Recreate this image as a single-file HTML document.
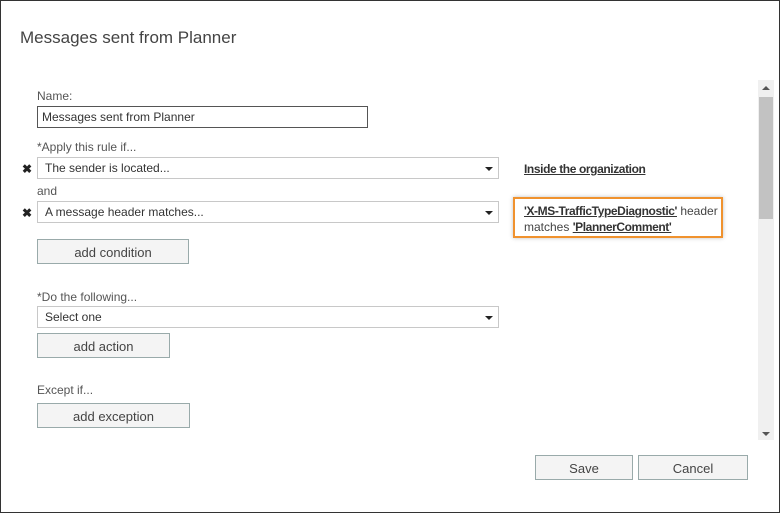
<!DOCTYPE html>
<html><head><style>
*{margin:0;padding:0;box-sizing:border-box}
body{width:780px;height:513px;background:#fff;font-family:"Liberation Sans",sans-serif;font-size:12px;color:#333;position:relative;overflow:hidden}
.frame{position:absolute;left:0;top:0;width:780px;height:513px;border:1px solid #333}
.a{position:absolute;white-space:nowrap}
.lbl{color:#555}
.inp{position:absolute;border:1px solid #c8c8c8;background:#fff;height:22px;line-height:21px;padding-left:7px;color:#333}
.inp .ar{position:absolute;right:5px;top:9px;width:0;height:0;border-left:4px solid transparent;border-right:4px solid transparent;border-top:4px solid #222}
.btn{position:absolute;border:1px solid #9aa;background:#f4f4f4;height:25px;line-height:25px;text-align:center;color:#444;font-size:13px}
.x{position:absolute;font-size:12px;font-weight:bold;color:#222}
a{color:#333;text-decoration:underline;font-weight:bold;letter-spacing:-0.4px}
</style></head><body>
<div class="frame"></div>
<div class="a" style="left:20px;top:28px;font-size:17px;color:#444">Messages sent from Planner</div>
<div class="a lbl" style="left:37px;top:89px">Name:</div>
<div class="inp" style="left:37px;top:106px;width:331px;border-color:#555;padding-left:4px">Messages sent from Planner</div>
<div class="a lbl" style="left:37px;top:140px">*Apply this rule if...</div>
<div class="x" style="left:22px;top:162px">✖</div>
<div class="inp" style="left:37px;top:157px;width:462px">The sender is located...<span class="ar"></span></div>
<div class="a" style="left:524px;top:162px"><a>Inside the organization</a></div>
<div class="a lbl" style="left:37px;top:184px">and</div>
<div class="x" style="left:22px;top:206px">✖</div>
<div class="inp" style="left:37px;top:201px;width:462px">A message header matches...<span class="ar"></span></div>
<div class="a" style="left:513px;top:197px;width:210px;height:41px;border:2px solid #f0922e;box-shadow:0 0 4px rgba(0,0,0,.25);padding:4px 0 0 9px;line-height:16px;white-space:normal;color:#444"><a>'X-MS-TrafficTypeDiagnostic'</a> header<br>matches <a>'PlannerComment'</a></div>
<div class="btn" style="left:37px;top:239px;width:152px">add condition</div>
<div class="a lbl" style="left:37px;top:290px">*Do the following...</div>
<div class="inp" style="left:37px;top:306px;width:462px">Select one<span class="ar"></span></div>
<div class="btn" style="left:37px;top:333px;width:133px">add action</div>
<div class="a lbl" style="left:37px;top:383px">Except if...</div>
<div class="btn" style="left:37px;top:403px;width:153px">add exception</div>
<div class="a" style="left:758px;top:80px;width:16px;height:360px;background:#f0f0f0"></div>
<div class="a" style="left:759px;top:97px;width:14px;height:122px;background:#c2c2c2"></div>
<div class="a" style="left:762px;top:86px;border-left:4px solid transparent;border-right:4px solid transparent;border-bottom:4px solid #555"></div>
<div class="a" style="left:762px;top:432px;border-left:4px solid transparent;border-right:4px solid transparent;border-top:4px solid #555"></div>
<div class="btn" style="left:535px;top:455px;width:98px">Save</div>
<div class="btn" style="left:638px;top:455px;width:110px">Cancel</div>
</body></html>
